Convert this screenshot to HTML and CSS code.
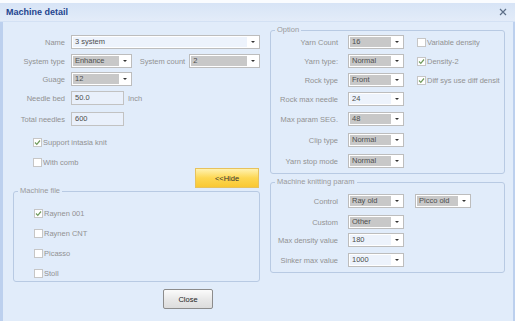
FILE: index.html
```html
<!DOCTYPE html>
<html lang="en">
<head>
  <meta charset="UTF-8">
  <title>Machine detail</title>
  <link rel="stylesheet" href="styles.css">
</head>
<body>
  <div class="window">
    <div class="titlebar">
      <span class="title">Machine detail</span>
      <svg class="close-x" width="8" height="8" viewBox="0 0 8 8"><path d="M1 1L7 7M7 1L1 7" stroke="#5d6f88" stroke-width="1.2"/></svg>
    </div>
    <div class="body">
      <div class="left">
        <div class="row">
          <span class="lbl">Name</span>
          <div class="combo w189 light"><span class="val">3 system</span><span class="arrow"></span></div>
        </div>
        <div class="row g4">
          <span class="lbl">System type</span>
          <div class="combo w61"><span class="val">Enhance</span><span class="arrow"></span></div>
          <span class="lbl2">System count</span>
          <div class="combo w71"><span class="val">2</span><span class="arrow"></span></div>
        </div>
        <div class="row">
          <span class="lbl">Guage</span>
          <div class="combo w61"><span class="val">12</span><span class="arrow"></span></div>
        </div>
        <div class="row g7">
          <span class="lbl">Needle bed</span>
          <div class="tbox">50.0</div>
          <span class="unit">Inch</span>
        </div>
        <div class="row">
          <span class="lbl">Total needles</span>
          <div class="tbox">600</div>
        </div>
        <div class="chk first"><span class="box on"><svg width="7" height="7" viewBox="0 0 7 7"><path d="M1 3.5L2.8 5.3L6 1.5" fill="none" stroke="#6f9a5c" stroke-width="1.2"/></svg></span>Support intasia knit</div>
        <div class="chk"><span class="box"></span>With comb</div>
        <button class="hide">&lt;&lt;Hide</button>
        <fieldset class="grp mfile">
          <legend>Machine file</legend>
          <div class="chk"><span class="box on"><svg width="7" height="7" viewBox="0 0 7 7"><path d="M1 3.5L2.8 5.3L6 1.5" fill="none" stroke="#6f9a5c" stroke-width="1.2"/></svg></span>Raynen 001</div>
          <div class="chk"><span class="box"></span>Raynen CNT</div>
          <div class="chk"><span class="box"></span>Picasso</div>
          <div class="chk"><span class="box"></span>Stoll</div>
        </fieldset>
        <button class="close">Close</button>
      </div>
      <div class="right">
        <fieldset class="grp option">
          <legend>Option</legend>
          <div class="row">
            <span class="rlbl">Yarn Count</span>
            <div class="combo w56"><span class="val">16</span><span class="arrow"></span></div>
            <div class="chk side"><span class="box"></span>Variable density</div>
          </div>
          <div class="row">
            <span class="rlbl">Yarn type:</span>
            <div class="combo w56"><span class="val">Normal</span><span class="arrow"></span></div>
            <div class="chk side"><span class="box on"><svg width="7" height="7" viewBox="0 0 7 7"><path d="M1 3.5L2.8 5.3L6 1.5" fill="none" stroke="#6f9a5c" stroke-width="1.2"/></svg></span>Density-2</div>
          </div>
          <div class="row">
            <span class="rlbl">Rock type</span>
            <div class="combo w56"><span class="val">Front</span><span class="arrow"></span></div>
            <div class="chk side"><span class="box on"><svg width="7" height="7" viewBox="0 0 7 7"><path d="M1 3.5L2.8 5.3L6 1.5" fill="none" stroke="#6f9a5c" stroke-width="1.2"/></svg></span>Diff sys use diff densit</div>
          </div>
          <div class="row g6">
            <span class="rlbl">Rock max needle</span>
            <div class="combo w56 light"><span class="val">24</span><span class="arrow"></span></div>
          </div>
          <div class="row g7">
            <span class="rlbl">Max param SEG.</span>
            <div class="combo w56"><span class="val">48</span><span class="arrow"></span></div>
          </div>
          <div class="row g7">
            <span class="rlbl">Clip type</span>
            <div class="combo w56"><span class="val">Normal</span><span class="arrow"></span></div>
          </div>
          <div class="row last">
            <span class="rlbl">Yarn stop mode</span>
            <div class="combo w56"><span class="val">Normal</span><span class="arrow"></span></div>
          </div>
        </fieldset>
        <fieldset class="grp knit">
          <legend>Machine knitting param</legend>
          <div class="row g7">
            <span class="rlbl">Control</span>
            <div class="combo w56"><span class="val">Ray old</span><span class="arrow"></span></div>
            <div class="combo w56 second"><span class="val">Picco old</span><span class="arrow"></span></div>
          </div>
          <div class="row g4">
            <span class="rlbl">Custom</span>
            <div class="combo w56"><span class="val">Other</span><span class="arrow"></span></div>
          </div>
          <div class="row g6">
            <span class="rlbl">Max density value</span>
            <div class="combo w56 light"><span class="val">180</span><span class="arrow"></span></div>
          </div>
          <div class="row last">
            <span class="rlbl">Sinker max value</span>
            <div class="combo w56 light"><span class="val">1000</span><span class="arrow"></span></div>
          </div>
        </fieldset>
      </div>
    </div>
  </div>
</body>
</html>
```
FILE: styles.css
```css
* { box-sizing: border-box; }
body { margin: 0; font-family: "Liberation Sans", Arial, sans-serif; font-size: 7.5px; color: #929292; background: #fff; }
.window { width: 515px; height: 321px; display: flex; flex-direction: column; background: #e1ecfa; }
.titlebar { height: 22px; padding: 3px 8px 0 6px; display: flex; align-items: center; justify-content: space-between; background: linear-gradient(#fafcff 0, #fafcff 3px, #d7e4f6 3px, #e3ecf9 100%); border-bottom: 1px solid #d3e1f4; }
.title { font-size: 9px; font-weight: bold; color: #24448f; }
.body { flex: 1; display: flex; border-left: 3px solid #bcd0ee; border-right: 2px solid #bcd0ee; padding-left: 10px; }

/* rows and inputs */
.row { display: flex; align-items: center; height: 14px; margin-bottom: 5px; white-space: nowrap; }
.row.g4 { margin-bottom: 4px; }
.row.g6 { margin-bottom: 6px; }
.row.g7 { margin-bottom: 7px; }
.row.last { margin-bottom: 0; }
.lbl { width: 52px; margin-right: 6px; text-align: right; }
.lbl2 { margin: 0 4px 0 8px; }
.unit { margin-left: 4px; }
.combo { display: flex; height: 14px; border: 1px solid #bdbdbd; background: #fff; padding: 1px; }
.combo .val { flex: 1; background: #c8c8c8; color: #4e4e4e; padding-left: 2px; line-height: 10px; overflow: hidden; }
.combo.light .val { background: #edf3fc; }
.combo .arrow { width: 11px; position: relative; }
.combo .arrow::after { content: ""; position: absolute; left: 4px; top: 4px; border-left: 2px solid transparent; border-right: 2px solid transparent; border-top: 2px solid #333; }
.w189 { width: 189px; }
.w71 { width: 71px; }
.w61 { width: 61px; }
.w56 { width: 56px; }
.tbox { width: 53px; height: 14px; border: 1px solid #c2c2c2; background: #e9f0fb; color: #4e4e4e; padding-left: 3px; line-height: 12px; }

/* checkboxes */
.chk { display: flex; align-items: center; height: 12px; padding-left: 20px; white-space: nowrap; }
.box { width: 9px; height: 9px; border: 1px solid #c6c6c6; background: #fff; margin-right: 1px; display: flex; align-items: center; justify-content: center; }
.chk.first { margin-top: 5px; margin-bottom: 8px; }
.chk.side { padding-left: 0; margin-left: 13px; }

/* buttons */
.hide { align-self: flex-end; width: 64px; height: 20px; margin: 0 1px 0 0; border: 1px solid #e7c25c; background: linear-gradient(#fff2b0, #fdd752 50%, #f9c833); color: #333; font-family: inherit; font-size: 7.5px; padding: 0; }
.close { width: 50px; height: 20px; margin: 7px 0 0 150px; border: 1px solid #8c8c8c; border-radius: 2px; background: linear-gradient(#fbfbfb, #e9e9e9 50%, #dcdcdc); color: #222; font-family: inherit; font-size: 7.5px; padding: 0; }

/* group boxes */
.grp { margin: 0; border: 1px solid #b8cae3; border-radius: 3px; padding: 0; min-width: 0; }
.grp legend { padding: 0 2px; margin-left: 4px; line-height: 8px; color: #9a9a9a; }
.left { width: 247px; padding-top: 13px; display: flex; flex-direction: column; }
.mfile { margin-top: -1px; padding: 12px 0 2px; }
.mfile .chk { margin-bottom: 8px; }
.mfile .chk:last-child { margin-bottom: 0; }
.right { width: 235px; margin-left: 10px; }
.rlbl { width: 67px; margin-right: 10px; text-align: right; }
.option { margin-top: 4px; padding: 1px 0 5px; }
.knit { margin-top: 4px; padding: 8px 0 5px; }
.second { margin-left: 11px; }
```
